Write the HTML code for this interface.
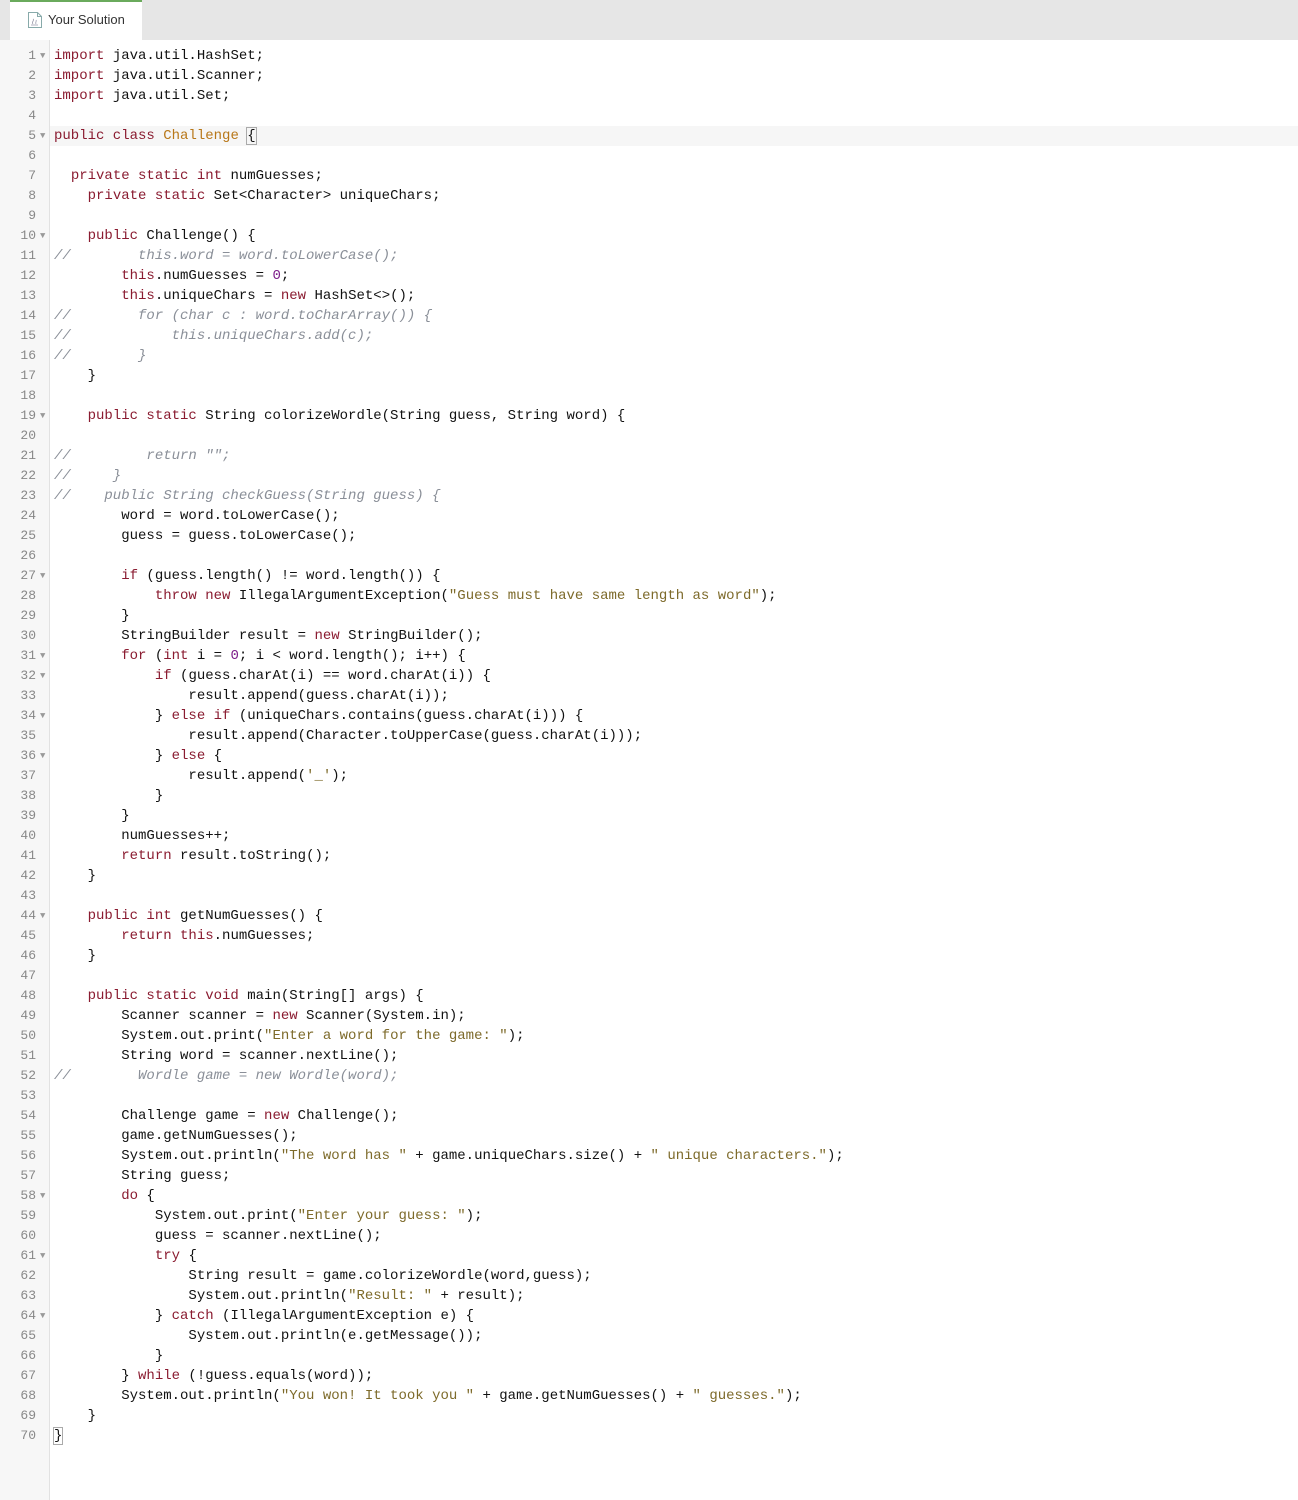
<!DOCTYPE html>
<html><head><meta charset="utf-8"><style>
body{margin:0;background:#fff;width:1298px;height:1500px;overflow:hidden;font-family:"Liberation Sans",sans-serif}
.bar{position:absolute;left:0;top:0;width:1298px;height:40px;background:#e6e6e6}
.tab{position:absolute;left:10px;top:0;width:132px;height:40px;background:#fff;border-top:2px solid #6aaa5c;box-sizing:border-box}
.tab span{position:absolute;left:38px;top:10px;font-size:13px;color:#333}
.tab svg{position:absolute;left:17px;top:9px}
.gut{position:absolute;left:0;top:40px;width:49px;height:1460px;background:#f7f7f7;border-right:1px solid #e2e2e2}
.code{position:absolute;left:0;top:46px;width:1298px;font-family:"Liberation Mono",monospace;font-size:14px}
.l{height:20px;line-height:20px;position:relative;white-space:pre;color:#111}
.n{position:absolute;left:0;width:36px;text-align:right;color:#888;font-size:13px}
.f{position:absolute;left:40px;top:0;color:#999;font-size:9px}
.t{position:absolute;left:54px}
.act{background:#f6f6f6}
.k{color:#8a1b30}.s{color:#7d6a2a}.c{color:#8a8f98;font-style:italic}.m{color:#7d1d8a}.o{color:#b87718}
.box{outline:1px solid #aaa}
</style></head><body>
<div class="bar"></div>
<div class="tab"><svg width="16" height="18" viewBox="0 0 16 18"><path d="M1.5 1.5h9l4 4v11h-13z" fill="#fff" stroke="#8aa" /><path d="M10.5 1.5v4h4" fill="none" stroke="#8aa"/><path d="M6 8c2 1-2 3 0 5M9 9c1 1-1 2 0 4M4 14h7" fill="none" stroke="#99a" stroke-width=".8"/></svg><span>Your Solution</span></div>
<div class="gut"></div>
<div class="code">
<div class="l"><span class="n">1</span><span class="f">▼</span><span class="t"><span class="k">import</span> java.util.HashSet;</span></div>
<div class="l"><span class="n">2</span><span class="t"><span class="k">import</span> java.util.Scanner;</span></div>
<div class="l"><span class="n">3</span><span class="t"><span class="k">import</span> java.util.Set;</span></div>
<div class="l"><span class="n">4</span></div>
<div class="l act" style="margin-left:50px"><span class="n" style="left:-50px">5</span><span class="f" style="left:-10px">▼</span><span class="t" style="left:4px"><span class="k">public class</span> <span class="o">Challenge</span> <span class="box">{</span><span style="border-left:1px solid #000"></span></span></div>
<div class="l"><span class="n">6</span></div>
<div class="l"><span class="n">7</span><span class="t">  <span class="k">private static int</span> numGuesses;</span></div>
<div class="l"><span class="n">8</span><span class="t">    <span class="k">private static</span> Set&lt;Character&gt; uniqueChars;</span></div>
<div class="l"><span class="n">9</span></div>
<div class="l"><span class="n">10</span><span class="f">▼</span><span class="t">    <span class="k">public</span> Challenge() {</span></div>
<div class="l"><span class="n">11</span><span class="t"><span class="c">//        this.word = word.toLowerCase();</span></span></div>
<div class="l"><span class="n">12</span><span class="t">        <span class="k">this</span>.numGuesses = <span class="m">0</span>;</span></div>
<div class="l"><span class="n">13</span><span class="t">        <span class="k">this</span>.uniqueChars = <span class="k">new</span> HashSet&lt;&gt;();</span></div>
<div class="l"><span class="n">14</span><span class="t"><span class="c">//        for (char c : word.toCharArray()) {</span></span></div>
<div class="l"><span class="n">15</span><span class="t"><span class="c">//            this.uniqueChars.add(c);</span></span></div>
<div class="l"><span class="n">16</span><span class="t"><span class="c">//        }</span></span></div>
<div class="l"><span class="n">17</span><span class="t">    }</span></div>
<div class="l"><span class="n">18</span></div>
<div class="l"><span class="n">19</span><span class="f">▼</span><span class="t">    <span class="k">public static</span> String colorizeWordle(String guess, String word) {</span></div>
<div class="l"><span class="n">20</span></div>
<div class="l"><span class="n">21</span><span class="t"><span class="c">//         return "";</span></span></div>
<div class="l"><span class="n">22</span><span class="t"><span class="c">//     }</span></span></div>
<div class="l"><span class="n">23</span><span class="t"><span class="c">//    public String checkGuess(String guess) {</span></span></div>
<div class="l"><span class="n">24</span><span class="t">        word = word.toLowerCase();</span></div>
<div class="l"><span class="n">25</span><span class="t">        guess = guess.toLowerCase();</span></div>
<div class="l"><span class="n">26</span></div>
<div class="l"><span class="n">27</span><span class="f">▼</span><span class="t">        <span class="k">if</span> (guess.length() != word.length()) {</span></div>
<div class="l"><span class="n">28</span><span class="t">            <span class="k">throw new</span> IllegalArgumentException(<span class="s">"Guess must have same length as word"</span>);</span></div>
<div class="l"><span class="n">29</span><span class="t">        }</span></div>
<div class="l"><span class="n">30</span><span class="t">        StringBuilder result = <span class="k">new</span> StringBuilder();</span></div>
<div class="l"><span class="n">31</span><span class="f">▼</span><span class="t">        <span class="k">for</span> (<span class="k">int</span> i = <span class="m">0</span>; i &lt; word.length(); i++) {</span></div>
<div class="l"><span class="n">32</span><span class="f">▼</span><span class="t">            <span class="k">if</span> (guess.charAt(i) == word.charAt(i)) {</span></div>
<div class="l"><span class="n">33</span><span class="t">                result.append(guess.charAt(i));</span></div>
<div class="l"><span class="n">34</span><span class="f">▼</span><span class="t">            } <span class="k">else if</span> (uniqueChars.contains(guess.charAt(i))) {</span></div>
<div class="l"><span class="n">35</span><span class="t">                result.append(Character.toUpperCase(guess.charAt(i)));</span></div>
<div class="l"><span class="n">36</span><span class="f">▼</span><span class="t">            } <span class="k">else</span> {</span></div>
<div class="l"><span class="n">37</span><span class="t">                result.append(<span class="s">'_'</span>);</span></div>
<div class="l"><span class="n">38</span><span class="t">            }</span></div>
<div class="l"><span class="n">39</span><span class="t">        }</span></div>
<div class="l"><span class="n">40</span><span class="t">        numGuesses++;</span></div>
<div class="l"><span class="n">41</span><span class="t">        <span class="k">return</span> result.toString();</span></div>
<div class="l"><span class="n">42</span><span class="t">    }</span></div>
<div class="l"><span class="n">43</span></div>
<div class="l"><span class="n">44</span><span class="f">▼</span><span class="t">    <span class="k">public int</span> getNumGuesses() {</span></div>
<div class="l"><span class="n">45</span><span class="t">        <span class="k">return this</span>.numGuesses;</span></div>
<div class="l"><span class="n">46</span><span class="t">    }</span></div>
<div class="l"><span class="n">47</span></div>
<div class="l"><span class="n">48</span><span class="t">    <span class="k">public static void</span> main(String[] args) {</span></div>
<div class="l"><span class="n">49</span><span class="t">        Scanner scanner = <span class="k">new</span> Scanner(System.in);</span></div>
<div class="l"><span class="n">50</span><span class="t">        System.out.print(<span class="s">"Enter a word for the game: "</span>);</span></div>
<div class="l"><span class="n">51</span><span class="t">        String word = scanner.nextLine();</span></div>
<div class="l"><span class="n">52</span><span class="t"><span class="c">//        Wordle game = new Wordle(word);</span></span></div>
<div class="l"><span class="n">53</span></div>
<div class="l"><span class="n">54</span><span class="t">        Challenge game = <span class="k">new</span> Challenge();</span></div>
<div class="l"><span class="n">55</span><span class="t">        game.getNumGuesses();</span></div>
<div class="l"><span class="n">56</span><span class="t">        System.out.println(<span class="s">"The word has "</span> + game.uniqueChars.size() + <span class="s">" unique characters."</span>);</span></div>
<div class="l"><span class="n">57</span><span class="t">        String guess;</span></div>
<div class="l"><span class="n">58</span><span class="f">▼</span><span class="t">        <span class="k">do</span> {</span></div>
<div class="l"><span class="n">59</span><span class="t">            System.out.print(<span class="s">"Enter your guess: "</span>);</span></div>
<div class="l"><span class="n">60</span><span class="t">            guess = scanner.nextLine();</span></div>
<div class="l"><span class="n">61</span><span class="f">▼</span><span class="t">            <span class="k">try</span> {</span></div>
<div class="l"><span class="n">62</span><span class="t">                String result = game.colorizeWordle(word,guess);</span></div>
<div class="l"><span class="n">63</span><span class="t">                System.out.println(<span class="s">"Result: "</span> + result);</span></div>
<div class="l"><span class="n">64</span><span class="f">▼</span><span class="t">            } <span class="k">catch</span> (IllegalArgumentException e) {</span></div>
<div class="l"><span class="n">65</span><span class="t">                System.out.println(e.getMessage());</span></div>
<div class="l"><span class="n">66</span><span class="t">            }</span></div>
<div class="l"><span class="n">67</span><span class="t">        } <span class="k">while</span> (!guess.equals(word));</span></div>
<div class="l"><span class="n">68</span><span class="t">        System.out.println(<span class="s">"You won! It took you "</span> + game.getNumGuesses() + <span class="s">" guesses."</span>);</span></div>
<div class="l"><span class="n">69</span><span class="t">    }</span></div>
<div class="l"><span class="n">70</span><span class="t"><span class="box">}</span></span></div>
</div>
</body></html>
